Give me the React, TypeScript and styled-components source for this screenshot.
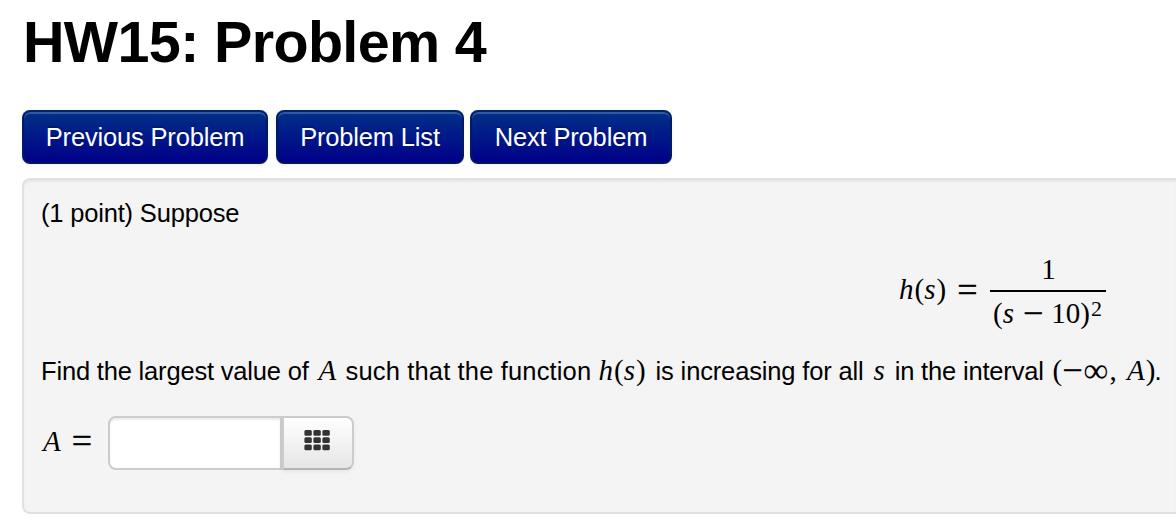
import styled, { createGlobalStyle } from 'styled-components'
import { useState } from 'react'

const GlobalStyle = createGlobalStyle`
    * {
        box-sizing: border-box;
    }
    body {
        margin: 0;
        background: #fff;
        color: #000;
        font-family: "Liberation Sans", Arial, sans-serif;
        font-size: 25.5px;
    }
`

const Page = styled.div`
    height: 526px;
    padding: 0 0 0 22px;
`

const Title = styled.h1`
    margin: 0;
    padding: 2px 0 0 1px;
    height: 110px;
    font-size: 57.5px;
    line-height: 80px;
    font-weight: bold;
    letter-spacing: -.65px;
`

const ButtonBar = styled.nav`
    display: flex;
    height: 54px;
`

const NavButton = styled.button<{ $width: number, $gap?: number }>`
    width: ${props => props.$width}px;
    height: 54px;
    margin: 0 ${props => props.$gap || 0}px 0 0;
    padding: 1px 0 0;
    border: 2px solid;
    border-color: #002466 #001a66 #001760;
    border-radius: 8px;
    color: #fff;
    background: linear-gradient(to bottom, #003088, #000088);
    box-shadow: inset 0 2px 0 rgba(255, 255, 255, .2), 0 2px 4px rgba(0, 0, 0, .05);
    text-shadow: 0 -2px 0 rgba(0, 0, 0, .25);
    font: 25.5px "Liberation Sans", Arial, sans-serif;
    letter-spacing: -.17px;
    white-space: nowrap;
`

/* runs up to the right edge of the window, so no border there */
const ProblemPanel = styled.main`
    height: 336px;
    margin-top: 14px;
    padding: 15px 0 0 17px;
    border: 2px solid #e1e1e1;
    border-right: 0;
    border-radius: 8px 0 0 8px;
    background: #f4f4f4;
    box-shadow: inset 0 2px 2px rgba(0, 0, 0, .05);
`

const Line = styled.p`
    display: flex;
    align-items: baseline;
    margin: 0;
    height: 36px;
    line-height: 36px;
    letter-spacing: -.18px;
    white-space: pre;
`

const Words = styled.span<{ $spacing: number }>`
    letter-spacing: ${props => props.$spacing}px;
`

const Equation = styled.div`
    display: flex;
    align-items: center;
    height: 103px;
    margin: 18px 0 0 858px;
    padding-bottom: 19px;
`

const MathText = styled.span<{ $left?: number, $right?: number, $lift?: number }>`
    margin: 0 ${props => props.$right || 0}px 0 ${props => props.$left || 0}px;
    padding-bottom: ${props => props.$lift || 0}px;
    font-family: "Liberation Serif", "Times New Roman", serif;
    font-size: 29px;
    line-height: 36px;
    letter-spacing: 0;
    white-space: pre;
    i {
        padding-right: 1px;
    }
`

const Operator = styled.span<{ $gap?: number }>`
    position: relative;
    top: 2px;
    margin: 0 ${props => props.$gap || 0}px;
    font-size: 36px;
    line-height: 0;
    -webkit-text-stroke: .4px #000;
`

const Infinity = styled(Operator)`
    font-size: 35px;
    -webkit-text-stroke: 0;
`

const Fraction = styled.span`
    display: flex;
    flex-direction: column;
    align-items: center;
    width: 116px;
    margin-left: 13px;
`

const Bar = styled.span`
    width: 100%;
    height: 2px;
    margin: 3px 0;
    background: #000;
`

const Power = styled.sup`
    margin-left: 1px;
    font-size: 22px;
    line-height: 0;
    vertical-align: 7px;
`

const AnswerRow = styled.div`
    display: flex;
    align-items: center;
    height: 54px;
    margin-top: 28px;
`

const AnswerInput = styled.input`
    width: 174px;
    height: 54px;
    margin-left: 16px;
    padding: 8px 12px;
    border: 2px solid #ccc;
    border-radius: 8px 0 0 8px;
    background: #fff;
    box-shadow: inset 0 2px 2px rgba(0, 0, 0, .075);
    font: 25px "Liberation Sans", Arial, sans-serif;
    outline: none;
`

const KeypadButton = styled.button`
    display: flex;
    align-items: center;
    justify-content: center;
    width: 72px;
    height: 54px;
    padding: 0 2px 5px 0;
    border: 2px solid #ccc;
    border-bottom-color: #b3b3b3;
    border-radius: 0 8px 8px 0;
    background: linear-gradient(to bottom, #fff, #e6e6e6);
    box-shadow: 0 2px 4px rgba(0, 0, 0, .05);
`

function KeypadIcon() {
    return (
      <svg width="26" height="21" viewBox="0 0 26 21" fill="#333">
        {[0, 7.2, 14.4].map(y => (
          [0.4, 9.4, 18.4].map(x => <rect key={`${x}-${y}`} x={x} y={y} width="7.4" height="5.8" rx="1.5" />)
        ))}
      </svg>
    )
}

export default function App() {
const [answer, setAnswer] = useState('')

    return (
      <>
        <GlobalStyle />
        <Page>
          <Title>HW15: Problem 4</Title>
          <ButtonBar>
            <NavButton $width={246} $gap={8}>Previous Problem</NavButton>
            <NavButton $width={188} $gap={6}>Problem List</NavButton>
            <NavButton $width={202}>Next Problem</NavButton>
          </ButtonBar>
          <ProblemPanel>
            <Line>(1 point) Suppose</Line>
            <Equation>
              <MathText $lift={4}><i>h</i>(<i>s</i>)</MathText>
              <MathText $left={11} $lift={2}><Operator>=</Operator></MathText>
              <Fraction>
                <MathText>1</MathText>
                <Bar />
                <MathText $right={2}>(<i>s</i><Operator $gap={8}>−</Operator>10)<Power>2</Power></MathText>
              </Fraction>
            </Equation>
            <Line>
              Find the largest value of <MathText $left={3} $right={1}><i>A</i></MathText><Words $spacing={0.15}> such that the function </Words><MathText $right={3}><i>h</i>(<i>s</i>)</MathText><Words $spacing={-0.15}> is increasing for all </Words><MathText $left={3} $right={2}><i>s</i></MathText> in the interval <MathText $left={2}>(<Operator>−</Operator><Infinity $gap={1}>∞</Infinity>, </MathText><MathText $left={3} $right={-1}><i>A</i>)</MathText>.
            </Line>
            <AnswerRow>
              <MathText $left={2} $lift={5}><i>A</i></MathText>
              <MathText $left={10} $lift={4}><Operator>=</Operator></MathText>
              <AnswerInput value={answer} onChange={e => setAnswer(e.target.value)} />
              <KeypadButton><KeypadIcon /></KeypadButton>
            </AnswerRow>
          </ProblemPanel>
        </Page>
      </>
    )
}
